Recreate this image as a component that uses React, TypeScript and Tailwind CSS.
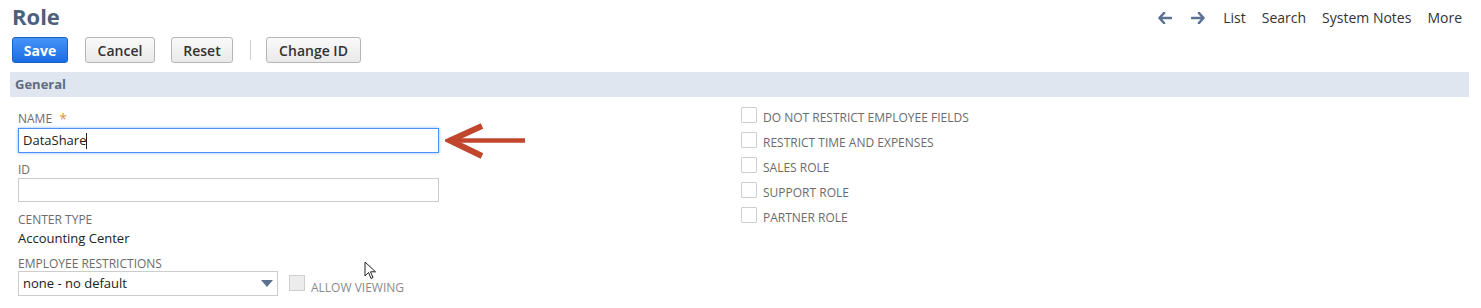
import React from 'react';

const font = { fontFamily: '"Open Sans", "Liberation Sans", sans-serif' };

const Label = ({ children }: { children: React.ReactNode }) => (
  <div className="text-[12px] leading-[14px] text-[#6b6b6b] uppercase">{children}</div>
);

const CheckRow = ({ label }: { label: string }) => (
  <div className="flex items-center h-[25px]">
    <div className="w-[16px] h-[16px] border border-[#cfcfcf] bg-white rounded-[1px]" />
    <span className="ml-[6px] text-[12px] leading-[14px] text-[#6b6b6b] mt-[6px]">{label}</span>
  </div>
);

const App = () => {
  return (
    <div className="relative w-[1481px] h-[308px] bg-white overflow-hidden" style={font}>
      <div className="flex justify-between items-start px-[12px] h-[30px]">
        <h1 className="text-[22px] leading-[30px] font-bold text-[#4d5f79] pt-[1px]">Role</h1>
        <div className="flex items-center pt-[7px] pr-[7px] text-[14px] text-[#333]">
          <svg width="14" height="12" viewBox="0 0 14 12">
            <path d="M6 1 L1.5 6 L6 11 M2 6 H13" fill="none" stroke="#5b7192" strokeWidth="2.6" strokeLinejoin="round" strokeLinecap="round" />
          </svg>
          <svg width="14" height="12" viewBox="0 0 14 12" className="ml-[19px]">
            <path d="M8 1 L12.5 6 L8 11 M12 6 H1" fill="none" stroke="#5b7192" strokeWidth="2.6" strokeLinejoin="round" strokeLinecap="round" />
          </svg>
          <span className="ml-[18px]">List</span>
          <span className="ml-[16px]">Search</span>
          <span className="ml-[16px]">System Notes</span>
          <span className="ml-[16px]">More</span>
        </div>
      </div>

      <div className="flex items-center px-[12px] mt-[7px] h-[26px]">
        <button className="h-[26px] w-[56px] rounded-[3px] border border-[#1561c9] bg-gradient-to-b from-[#4594f8] to-[#1a6ce4] text-white text-[14px] font-bold">
          Save
        </button>
        <button className="ml-[17px] h-[26px] w-[70px] rounded-[3px] border border-[#b5b5b5] bg-gradient-to-b from-[#fafafa] to-[#e9e9e9] text-[#333] text-[14px] font-semibold">
          Cancel
        </button>
        <button className="ml-[16px] h-[26px] w-[62px] rounded-[3px] border border-[#b5b5b5] bg-gradient-to-b from-[#fafafa] to-[#e9e9e9] text-[#333] text-[14px] font-semibold">
          Reset
        </button>
        <div className="ml-[17px] w-px h-[20px] bg-[#cfcfcf]" />
        <button className="ml-[15px] h-[26px] w-[95px] rounded-[3px] border border-[#b5b5b5] bg-gradient-to-b from-[#fafafa] to-[#e9e9e9] text-[#333] text-[14px] font-semibold">
          Change ID
        </button>
      </div>

      <div className="ml-[10px] mr-[12px] mt-[9px] h-[25px] bg-[#e0e6ef] flex items-center pl-[5px]">
        <span className="text-[13px] font-bold text-[#5c6c84]">General</span>
      </div>

      <div className="flex">
        <div className="ml-[18px] w-[421px] flex flex-col pt-[14px]">
          <Label>
            Name <span className="text-[#e0962b] text-[14px] ml-[4px] relative top-[1px]">*</span>
          </Label>
          <div className="mt-[2px] h-[25px] border border-[#4d90fe] shadow-[0_0_3px_#8ab8f5] flex items-center pl-[4px] text-[13px] text-[#222]">
            DataShare<span className="w-px h-[16px] bg-[#222]" />
          </div>
          <div className="mt-[10px]">
            <Label>ID</Label>
          </div>
          <div className="mt-[1px] h-[24px] border border-[#cccccc]" />
          <div className="mt-[11px]">
            <Label>Center Type</Label>
          </div>
          <div className="mt-[3px] text-[13px] leading-[16px] text-[#222]">Accounting Center</div>
          <div className="mt-[11px]">
            <Label>Employee Restrictions</Label>
          </div>
          <div className="flex items-start">
            <div className="shrink-0 w-[260px] h-[25px] border border-[#cccccc] flex items-center justify-between pl-[4px] pr-[4px] text-[13px] text-[#222]">
              <span>none - no default</span>
              <svg width="12" height="7" viewBox="0 0 12 7">
                <path d="M0 0 H12 L6 7 Z" fill="#5b7192" />
              </svg>
            </div>
            <div className="shrink-0 ml-[11px] mt-[4px] w-[16px] h-[16px] border border-[#cfcfcf] bg-[#ececec]" />
            <span className="shrink-0 ml-[6px] mt-[10px] text-[12px] leading-[14px] text-[#8a8a8a]">ALLOW VIEWING</span>
          </div>
        </div>

        <div className="ml-[302px] pt-[5px] flex flex-col">
          <CheckRow label="DO NOT RESTRICT EMPLOYEE FIELDS" />
          <CheckRow label="RESTRICT TIME AND EXPENSES" />
          <CheckRow label="SALES ROLE" />
          <CheckRow label="SUPPORT ROLE" />
          <CheckRow label="PARTNER ROLE" />
        </div>
      </div>

      {/* annotation arrow */}
      <svg className="absolute left-[445px] top-[121px]" width="84" height="40" viewBox="0 0 84 40">
        <path d="M80 19.5 H8" stroke="#c0472e" strokeWidth="4.5" fill="none" />
        <path d="M37 5 L5 19.5 L37 35" stroke="#c0472e" strokeWidth="6" fill="none" strokeLinejoin="miter" />
      </svg>

      {/* mouse cursor */}
      <svg className="absolute left-[364px] top-[261px]" width="14" height="20" viewBox="0 0 14 20">
        <path d="M1 1 V15 L4.5 11.5 L7 17.5 L9 16.5 L6.5 10.8 H11.5 Z" fill="#fff" stroke="#222" strokeWidth="1" strokeLinejoin="round" />
      </svg>
    </div>
  );
};

export default App;
